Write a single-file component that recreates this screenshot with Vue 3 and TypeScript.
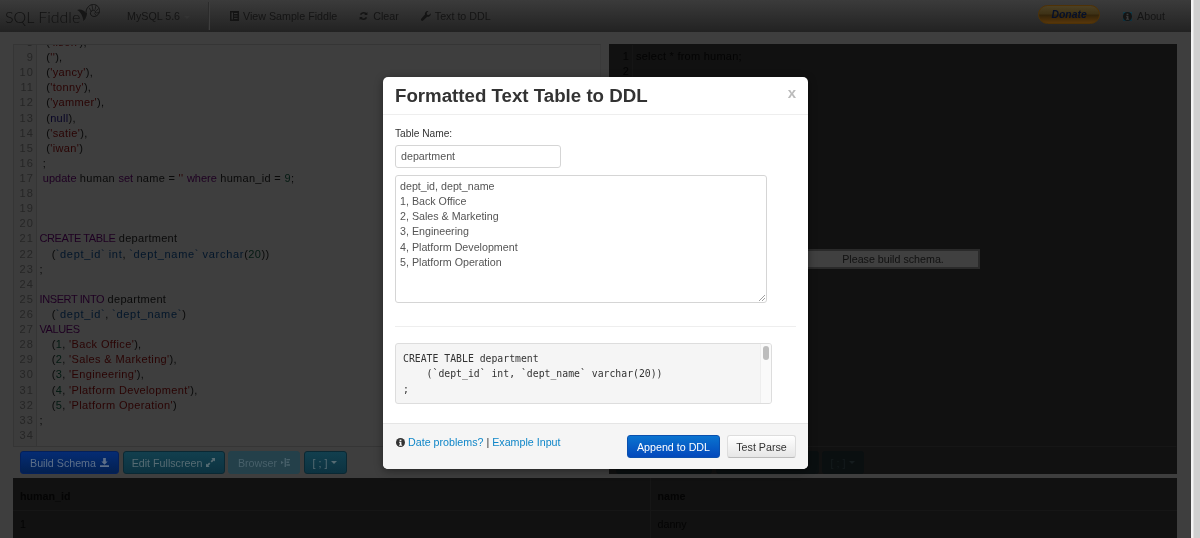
<script setup lang="ts">
type Tok = [string, string]
type Line = Tok[]
const k = 'kw', c = 'kw caps', s = 'str', v = 'vr', n = 'num', a = 'atom', p = 'pl', d = 'ind'
const first = 8
const left: Line[] = [
  [[p, "  ("], [s, "'lisen'"], [p, "),"]],
  [[p, "  ("], [s, "''"], [p, "),"]],
  [[p, "  ("], [s, "'yancy'"], [p, "),"]],
  [[p, "  ("], [s, "'tonny'"], [p, "),"]],
  [[p, "  ("], [s, "'yammer'"], [p, "),"]],
  [[p, "  ("], [a, "null"], [p, "),"]],
  [[p, "  ("], [s, "'satie'"], [p, "),"]],
  [[p, "  ("], [s, "'iwan'"], [p, ")"]],
  [[p, " ;"]],
  [[p, " "], [k, "update"], [p, " human "], [k, "set"], [p, " name = "], [s, "''"], [p, " "], [k, "where"], [p, " human_id = "], [n, "9"], [p, ";"]],
  [],
  [],
  [],
  [[c, "CREATE TABLE"], [p, " department"]],
  [[d, "   "], [p, "("], [v, "`dept_id`"], [p, " "], [v, "int"], [p, ", "], [v, "`dept_name`"], [p, " "], [v, "varchar"], [p, "("], [n, "20"], [p, "))"]],
  [[p, ";"]],
  [],
  [[c, "INSERT INTO"], [p, " department"]],
  [[d, "   "], [p, "("], [v, "`dept_id`"], [p, ", "], [v, "`dept_name`"], [p, ")"]],
  [[c, "VALUES"]],
  [[d, "   "], [p, "("], [n, "1"], [p, ", "], [s, "'Back Office'"], [p, "),"]],
  [[d, "   "], [p, "("], [n, "2"], [p, ", "], [s, "'Sales & Marketing'"], [p, "),"]],
  [[d, "   "], [p, "("], [n, "3"], [p, ", "], [s, "'Engineering'"], [p, "),"]],
  [[d, "   "], [p, "("], [n, "4"], [p, ", "], [s, "'Platform Development'"], [p, "),"]],
  [[d, "   "], [p, "("], [n, "5"], [p, ", "], [s, "'Platform Operation'"], [p, ")"]],
  [[p, ";"]],
  [],
]
const ddlInput = `dept_id, dept_name
1, Back Office
2, Sales & Marketing
3, Engineering
4, Platform Development
5, Platform Operation`
const ddlOut = "CREATE TABLE department\n    (`dept_id` int, `dept_name` varchar(20))\n;"
</script>

<template>
  <div class="root">
    <div class="page">
      <header class="nav">
        <div class="brand">SQL Fiddle</div>
        <svg class="shell" width="24" height="17" viewBox="0 0 24 17" fill="none" stroke="#161616" stroke-width="1">
          <path d="M10 9C10 3 14 .5 17.500 .5C21 .5 23.500 3.500 23.500 6.500C23.500 10 21 12.500 18 12.500C15.500 12.500 14 10.500 14.500 8.500C15 6.500 17 5.800 18.500 6.500C19.800 7.200 19.800 9 18.500 9.500" />
          <path d="M13 3.500 15.500 8M16 1 16.800 5.800M20 1.200 19 5.800M22.500 4.500 20 7.200M23.300 8.500 20 9M20.500 11.800 19 10" stroke-width=".8" />
          <path d="M10.500 9C10.500 12 9 15 7.500 16.500" />
          <path d="M1 6C4 4.500 8 6 10 9C10.500 11 10 14 7.500 16.500C6.500 12 5 8 1 6z" fill="#161616" stroke="none" />
        </svg>
        <div class="db">MySQL 5.6 <span class="caret dimcaret"></span></div>
        <div class="sep"></div>
        <div class="item i1">
          <svg width="9" height="10" viewBox="0 0 9 10" fill="#141414"><path d="M0 0h9v10H0zM1.500 1.500v7h1.500v-7zM4 2v1h3.500V2zM4 4.500v1h3.500v-1zM4 7v1h3.500V7z" fill-rule="evenodd" /></svg>
          View Sample Fiddle
        </div>
        <div class="item i2">
          <svg width="9" height="10" viewBox="0 0 10 10" fill="none" stroke="#141414" stroke-width="1.700"><path d="M8.300 3.300A3.700 3.700 0 0 0 1.700 3.500M1.700 6.700a3.700 3.700 0 0 0 6.600-.2" /><path d="M9.300 .5v3.500H5.800zM.7 9.500V6h3.500z" fill="#141414" stroke="none" /></svg>
          Clear
        </div>
        <div class="item i3">
          <svg width="10" height="10" viewBox="0 0 10 10" fill="#141414"><path d="M9.800 2.200 8 4l-2-.3L5.700 1.800 7.500 0C6 -.3 4.400.6 4 2.200c-.1.500-.1 1 0 1.400L.3 7.800c-.5.600-.4 1.300 0 1.700.5.500 1.200.6 1.800 0L6.200 5.800c1.900.5 4-.9 3.600-3.600z" /></svg>
          Text to DDL
        </div>
        <div class="spacer"></div>
        <div class="donate">Donate</div>
        <div class="item about">
          <svg class="info" width="9" height="9" viewBox="0 0 10 10"><circle cx="5" cy="5" r="5" fill="#141414" /><rect x="4" y="1.800" width="2" height="1.600" fill="#3a3a3a" /><path d="M3.400 4.300h2.600v3.200h.8v1H3.400v-1h.8V5.300h-.8z" fill="#3a3a3a" /></svg>
          About
        </div>
      </header>

      <div class="panels">
        <section class="col">
          <div class="cm">
            <div class="gutter shifted">
              <div v-for="(_, i) in left" :key="i" class="ln">{{ first + i }}</div>
            </div>
            <div class="code shifted">
              <div v-for="(line, i) in left" :key="i" class="row"><span v-for="(t, j) in line" :key="j" :class="t[0]">{{ t[1] }}</span></div>
            </div>
          </div>
          <div class="btns">
            <button class="b build">Build Schema
              <svg width="9" height="9" viewBox="0 0 10 10" fill="#5d6f88"><path d="M3.500 0h3v4h2L5 7.500 1.500 4h2zM0 8h10v2H0z" /></svg>
            </button>
            <button class="b info edit">Edit Fullscreen
              <svg width="9" height="9" viewBox="0 0 10 10" fill="#566b73"><path d="M6 0h4v4L8.700 2.700 6.500 4.900 5.100 3.500 7.300 1.300zM4 10H0V6l1.300 1.300 2.200-2.200 1.400 1.400-2.200 2.200z" /></svg>
            </button>
            <button class="b info off browser">Browser
              <svg width="9" height="9" viewBox="0 0 10 10" fill="#48606a"><path d="M4 0h1.500v10H4zM0 3l3 2-3 2zM6 1h4v1.500H6zM6 4h3v1.500H6zM6 7h4v1.500H6z" /></svg>
            </button>
            <button class="b info term">[ ; ] <span class="caret light"></span></button>
          </div>
        </section>

        <section class="col dark">
          <div class="cm cmdark">
            <div class="gutter">
              <div class="ln">1</div>
              <div class="ln">2</div>
            </div>
            <div class="code"><div class="row">select * from human;</div></div>
            <div class="notice">Please build schema.</div>
          </div>
          <div class="btns rbtns">
            <button class="b rb run"></button>
            <button class="b rb ef"></button>
            <button class="b rb rt">[ ; ] <span class="caret verydark"></span></button>
          </div>
        </section>
      </div>

      <table class="result">
        <thead>
          <tr><th class="c1">human_id</th><th>name</th></tr>
        </thead>
        <tbody>
          <tr><td class="c1">1</td><td>danny</td></tr>
        </tbody>
      </table>

      <div class="modal">
        <div class="mhead">
          <h3>Formatted Text Table to DDL</h3>
          <span class="close">x</span>
        </div>
        <div class="mbody">
          <label class="lbl">Table Name:</label>
          <div class="input">department</div>
          <div class="ta">
            <pre class="tatext">{{ ddlInput }}</pre>
            <svg class="grip" width="7" height="7" viewBox="0 0 7 7" stroke="#888" stroke-width=".8"><path d="M1 7 7 1M4 7l3-3" /></svg>
          </div>
          <div class="hr"></div>
          <div class="out">
            <pre class="outtext">{{ ddlOut }}</pre>
            <div class="sb"><div class="thumb"></div></div>
          </div>
        </div>
        <div class="mfoot">
          <div class="links">
            <svg width="9" height="9" viewBox="0 0 10 10"><circle cx="5" cy="5" r="5" fill="#333" /><rect x="4" y="1.800" width="2" height="1.600" fill="#f5f5f5" /><path d="M3.400 4.300h2.600v3.200h.8v1H3.400v-1h.8V5.300h-.8z" fill="#f5f5f5" /></svg>
            <a>Date problems?</a> | <a>Example Input</a>
          </div>
          <div class="acts">
            <button class="mb primary">Append to DDL</button>
            <button class="mb plain">Test Parse</button>
          </div>
        </div>
      </div>
    </div>
    <div class="scroll"></div>
  </div>
</template>

<style>
html, body { margin: 0; background: #3e3e3e; }
</style>

<style scoped>
.root {
  display: flex;
  width: 1200px;
  height: 538px;
  overflow: hidden;
  font-family: "Liberation Sans", Arial, sans-serif;
  font-size: 10.7px;
  color: #111;
  filter: blur(0.3px);
}
.page {
  position: relative;
  width: 1191px;
  height: 538px;
  overflow: hidden;
  background: #3e3e3e;
  flex: none;
}
.scroll {
  flex: 1;
  background: #cfcfcf;
  border-left: 2px solid #f2f2f2;
  box-shadow: inset 1px 0 0 #e0e0e0;
}
.nav {
  height: 32px;
  display: flex;
  align-items: center;
  background: linear-gradient(#3b3b3b, #222);
  color: #141414;
  font-size: 10.7px;
}
.brand {
  margin-left: 5px;
  width: 71px;
  font-family: Lato, "Liberation Sans", sans-serif;
  font-weight: 300;
  font-size: 16px;
  white-space: nowrap;
  color: #101010;
  flex: none;
}
.shell { margin-left: 0; margin-top: -7px; flex: none; }
.db { margin-left: 27px; width: 81px; flex: none; font-size: 10.7px; }
.caret {
  display: inline-block;
  width: 0;
  height: 0;
  border-left: 3px solid transparent;
  border-right: 3px solid transparent;
  border-top: 3px solid #333;
  vertical-align: middle;
  margin-left: 1px;
}
.dimcaret { border-top-color: #333; }
.caret.light { border-top-color: #566b73; }
.caret.verydark { border-top-color: #151c1e; }
.sep { width: 1px; height: 28px; background: #2b2b2b; box-shadow: 1px 0 0 #3d3d3d; flex: none; }
.item { display: flex; align-items: center; gap: 4px; flex: none; }
.i1 { margin-left: 21px; }
.i2 { margin-left: 22px; gap: 5px; }
.i3 { margin-left: 22px; gap: 4px; }
.spacer { flex: 1; }
.donate {
  width: 60px;
  height: 17px;
  line-height: 17px;
  text-align: center;
  border: 1px solid #4f3206;
  border-radius: 10px;
  background: linear-gradient(#4c4024 0, #3e3216 45%, #33240a 55%, #57360a 100%);
  font-style: italic;
  font-weight: 700;
  color: #06102a;
  font-size: 10.4px;
  margin-top: -3px;
}
.about { margin-left: 23px; margin-right: 26px; gap: 5px; font-size: 10.7px; }

.panels {
  display: grid;
  grid-template-columns: 588px 568px;
  gap: 8px;
  height: 430px;
  margin: 12px 14px 0 13px;
}
.col { display: flex; flex-direction: column; min-width: 0; }
.dark { background: #111; }
.cm {
  position: relative;
  display: flex;
  height: 403px;
  overflow: hidden;
  background: #3e3e3e;
  border: 1px solid #353535;
  border-right-color: #3a3a3a;
  box-sizing: border-box;
  font-size: 11px;
}
.cmdark {
  background: #111;
  border-color: #111;
  border-bottom-color: #161616;
  color: #040404;
}
.gutter {
  width: 22px;
  flex: none;
  background: #3c3c3c;
  border-right: 1px solid #353535;
  text-align: right;
  color: #262626;
  letter-spacing: 1.1px;
  padding-top: 5px;
}
.cmdark .gutter { background: #111; border-right-color: #151515; color: #050505; padding-top: 4px; }
.ln { height: 15.12px; line-height: 15.12px; padding-right: 2px; }
.code { flex: 1; padding: 5px 0 0 2.500px; }
.cmdark .code { padding-top: 4px; padding-left: 3px; }
.cmdark .row { letter-spacing: .25px; }
.shifted { margin-top: -15px; height: 425px; }
.row { height: 15.12px; line-height: 15.12px; white-space: pre; }
.kw { color: #1e0022; }
.caps { letter-spacing: -.4px; }
.str { color: #2a0404; letter-spacing: .37px; }
.vr { color: #03162a; letter-spacing: .7px; }
.num { color: #041a12; letter-spacing: .6px; }
.atom { color: #080526; letter-spacing: .3px; }
.pl { color: #0a0a0a; letter-spacing: .3px; }
.ind { letter-spacing: 1px; }
.notice {
  position: absolute;
  left: 196px;
  top: 204px;
  width: 170px;
  height: 16px;
  line-height: 16px;
  text-align: center;
  background: #404040;
  border: 2px solid #2a2a2a;
  color: #111;
  font-size: 10.7px;
  letter-spacing: 0;
}
.btns { display: flex; gap: 3.500px; padding: 4px 0 0 7px; }
.rbtns { padding-left: 7px; }
.b {
  height: 23px;
  border-radius: 3px;
  border: 1px solid #0a2833;
  box-sizing: border-box;
  padding: 0;
  font-family: inherit;
  font-size: 10.7px;
  display: flex;
  align-items: center;
  justify-content: center;
  gap: 4px;
}
.build {
  width: 99px;
  background: linear-gradient(#052c74, #032050);
  border-color: #04205a;
  color: #5d6f88;
}
.info { background: linear-gradient(#123f4e, #0c3240); color: #566b73; }
.edit { width: 102px; }
.browser { width: 72px; }
.off { background: #24404a; border-color: #24404a; color: #48606a; }
.term { width: 43px; gap: 3px; }
.rb { background: #0a0f10; border-color: #0a0f10; color: #151c1e; }
.run { width: 96px; }
.ef { width: 103px; }
.rt { width: 42px; gap: 3px; }

.result {
  width: 1164px;
  margin: 4px 14px 0 13px;
  background: #111;
  border-collapse: collapse;
  color: #040404;
  font-size: 10.7px;
  table-layout: fixed;
}
.result th, .result td {
  text-align: left;
  padding: 0 7px;
  border-top: 1px solid #161616;
  box-sizing: border-box;
}
.result th { height: 32px; padding-top: 4px; font-weight: 700; border-top: 0; }
.result td { height: 28px; padding-bottom: 1px; }
.result .c1 { width: 637px; border-right: 1px solid #161616; }

.modal {
  position: absolute;
  left: 383px;
  top: 77px;
  width: 425px;
  height: 392px;
  box-sizing: border-box;
  display: flex;
  flex-direction: column;
  background: #fff;
  border-radius: 5px;
  color: #333;
  overflow: hidden;
  box-shadow: 0 2px 8px rgba(0,0,0,.4);
}
.mhead {
  height: 38px;
  box-sizing: border-box;
  flex: none;
  display: flex;
  align-items: center;
  justify-content: space-between;
  padding: 0 12px;
  border-bottom: 1px solid #eee;
}
.mhead h3 { margin: 0; font-size: 18.700px; font-weight: 700; color: #333; }
.close { font-weight: 700; font-size: 15px; color: #bbb; margin-bottom: 6px; }
.mbody { flex: 1; padding: 12px 12px 0; display: flex; flex-direction: column; align-items: flex-start; }
.lbl { height: 18px; line-height: 14px; font-size: 10.200px; }
.input {
  width: 166px;
  height: 23px;
  box-sizing: border-box;
  border: 1px solid #d5d5d5;
  border-radius: 3px;
  padding: 0 5px;
  line-height: 21px;
  color: #555;
  font-size: 10.7px;
}
.ta {
  position: relative;
  width: 372px;
  height: 128px;
  margin-top: 7px;
  box-sizing: border-box;
  border: 1px solid #d5d5d5;
  border-radius: 3px;
  padding: 3px 4px;
}
.tatext { margin: 0; font-family: inherit; font-size: 10.7px; line-height: 15.12px; color: #555; }
.grip { position: absolute; right: 1px; bottom: 1px; }
.hr { width: 401px; height: 1px; background: #eee; margin-top: 23px; flex: none; }
.out {
  position: relative;
  width: 377px;
  height: 61px;
  margin-top: 16px;
  box-sizing: border-box;
  background: #f5f5f5;
  border: 1px solid #ddd;
  border-radius: 3px;
  flex: none;
  overflow: hidden;
}
.outtext {
  margin: 0;
  padding: 7px 7px;
  font-family: "DejaVu Sans Mono", monospace;
  font-size: 9.800px;
  line-height: 15.300px;
  color: #333;
}
.sb { position: absolute; right: 0; top: 0; bottom: 0; width: 10px; background: #fafafa; border-left: 1px solid #eee; }
.thumb { width: 6px; height: 14px; border-radius: 3px; background: #bdbdbd; margin: 2px 0 0 2px; }
.mfoot {
  height: 46px;
  flex: none;
  box-sizing: border-box;
  background: #f5f5f5;
  border-top: 1px solid #e5e5e5;
  padding: 11px 12px 0 13px;
  display: flex;
  justify-content: space-between;
}
.links { color: #333; font-size: 10.7px; line-height: 15px; }
.links svg { margin-right: 3px; vertical-align: -1px; }
.links a { color: #0f86c8; }
.acts { display: flex; gap: 7px; }
.mb {
  height: 23px;
  box-sizing: border-box;
  border-radius: 3px;
  font-family: inherit;
  font-size: 10.7px;
  padding: 0;
}
.primary { width: 93px; color: #fff; border: 1px solid #0a50ae; background: linear-gradient(#0a74d0, #0348bc); }
.plain { width: 69px; color: #333; border: 1px solid #ddd; border-bottom-color: #bbb; background: linear-gradient(#fff, #e6e6e6); }
</style>
